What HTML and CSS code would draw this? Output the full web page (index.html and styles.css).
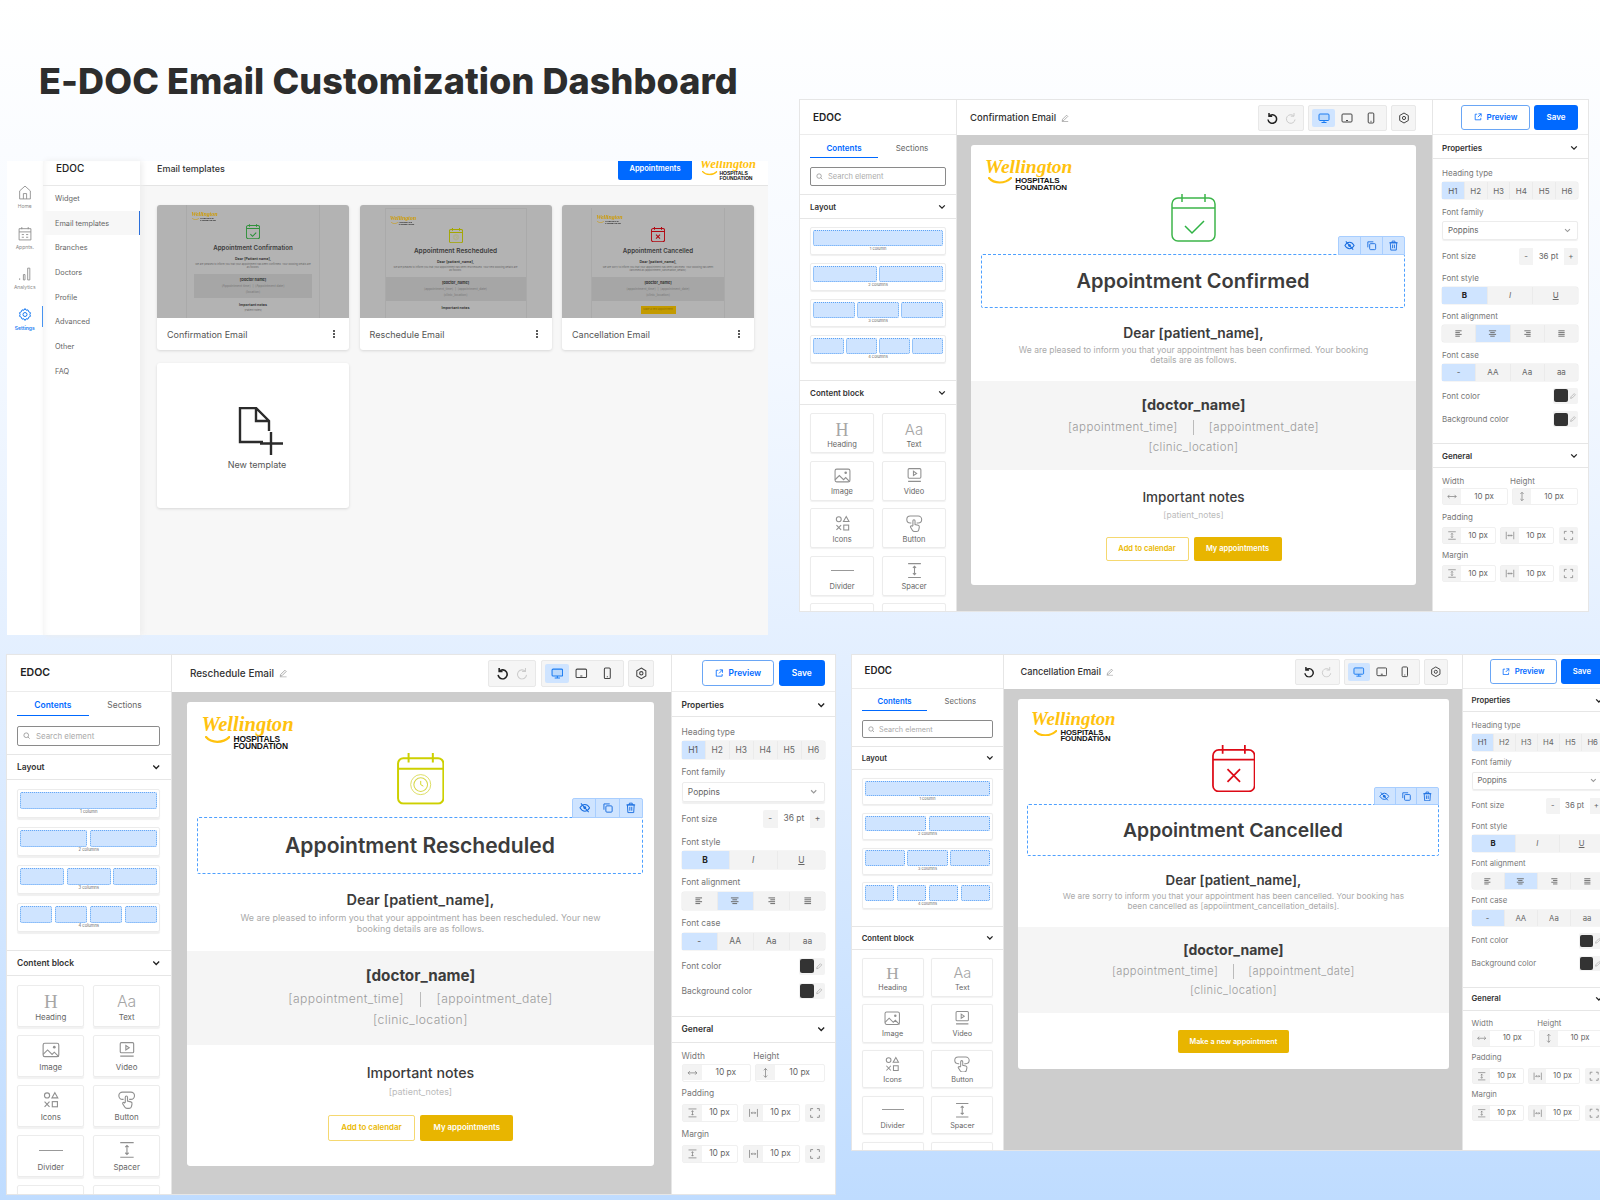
FILE: index.html
```html
<!DOCTYPE html>
<html lang="en">

<head>
    <meta charset="utf-8">
    <title>E-DOC Email Customization Dashboard</title>
    <link rel="stylesheet" href="styles.css">
</head>

<body>
    <!-- icons, used through <use> in all the windows -->
    <svg class="sprite" xmlns="http://www.w3.org/2000/svg">
        <symbol id="i-chevron" viewBox="0 0 10 10"><path d="M1.5 3l3.5 3.5L8.5 3" fill="none" stroke="currentColor" stroke-width="1.6"/></symbol>
        <symbol id="i-search" viewBox="0 0 10 10"><circle cx="4.4" cy="4.4" r="3.2" fill="none" stroke="currentColor"/><path d="M6.8 6.8L9 9" stroke="currentColor"/></symbol>
        <symbol id="i-pencil" viewBox="0 0 10 10"><path d="M1.5 8.5l.5-2L7 1.5l1.5 1.5-5 5zM1 9.5h8" fill="none" stroke="currentColor" stroke-width=".8"/></symbol>
        <symbol id="i-undo" viewBox="0 0 12 12"><path d="M3 1v3.2h3.2M3.2 4A4.3 4.3 0 1 1 2 7.5" fill="none" stroke="currentColor" stroke-width="1.5"/></symbol>
        <symbol id="i-redo" viewBox="0 0 12 12"><path d="M9 1v3.2H5.8M8.8 4A4.3 4.3 0 1 0 10 7.5" fill="none" stroke="currentColor" stroke-width="1"/></symbol>
        <symbol id="i-desktop" viewBox="0 0 12 12"><rect x="1" y="2" width="10" height="6.5" rx="1" fill="#bcd9fb" stroke="currentColor"/><path d="M6 8.5v2M3.5 10.5h5" stroke="currentColor"/></symbol>
        <symbol id="i-tablet" viewBox="0 0 12 12"><rect x="1" y="2" width="10" height="8" rx="1" fill="none" stroke="currentColor"/><path d="M5 8.5h2" stroke="currentColor"/></symbol>
        <symbol id="i-phone" viewBox="0 0 12 12"><rect x="3.2" y="1" width="5.6" height="10" rx="1" fill="none" stroke="currentColor"/><path d="M5.5 9.3h1" stroke="currentColor"/></symbol>
        <symbol id="i-gear" viewBox="0 0 12 12"><path d="M6 1l4.3 2.5v5L6 11 1.7 8.5v-5z" fill="none" stroke="currentColor"/><circle cx="6" cy="6" r="1.6" fill="none" stroke="currentColor"/></symbol>
        <symbol id="i-link" viewBox="0 0 10 10"><path d="M4 1.5H1.5v7h7V6M5.5 1h3.5v3.5M9 1L4.8 5.2" fill="none" stroke="currentColor"/></symbol>
        <symbol id="i-eye" viewBox="0 0 12 12"><path d="M1 6s2-3.5 5-3.5S11 6 11 6 9 9.5 6 9.5 1 6 1 6z" fill="none" stroke="currentColor" stroke-width="1.1"/><circle cx="6" cy="6" r="1.5" fill="currentColor"/><path d="M2 1.5l8 9" stroke="currentColor" stroke-width="1.1"/></symbol>
        <symbol id="i-copy" viewBox="0 0 12 12"><rect x="4" y="4" width="6.5" height="6.5" rx="1" fill="none" stroke="currentColor"/><path d="M8 2H2v6" fill="none" stroke="currentColor"/></symbol>
        <symbol id="i-trash" viewBox="0 0 12 12"><path d="M2.5 3h7l-.5 8H3zM1.5 3h9M4.5 3V1.2h3V3M5 5v4M7 5v4" fill="none" stroke="currentColor"/></symbol>
        <symbol id="i-image" viewBox="0 0 16 16"><rect x="1" y="2" width="14" height="12" rx="1.5" fill="none" stroke="currentColor"/><circle cx="11" cy="5.5" r="1.2" fill="currentColor"/><path d="M1 12l4-4 4 4 2-2 4 4" fill="none" stroke="currentColor"/></symbol>
        <symbol id="i-video" viewBox="0 0 16 16"><rect x="2" y="1.5" width="12" height="9" rx="1" fill="none" stroke="currentColor"/><path d="M7 4l3 2-3 2zM2 13.5h12" fill="none" stroke="currentColor"/></symbol>
        <symbol id="i-shapes" viewBox="0 0 16 16"><circle cx="4.5" cy="4" r="2.3" fill="none" stroke="currentColor"/><path d="M11.5 1.5l2.6 4.6H8.9zM2.3 9.5l4.4 4.6M6.7 9.5l-4.4 4.6" fill="none" stroke="currentColor"/><rect x="9.2" y="9.5" width="4.6" height="4.6" fill="none" stroke="currentColor"/></symbol>
        <symbol id="i-hand" viewBox="0 0 16 16"><path d="M5 7.500H4a2.700 2.700 0 0 1 0-6.500h7.500a2.700 2.700 0 0 1 0 6.500H10" fill="none" stroke="currentColor"/><path d="M6.500 10V5.500a1 1 0 0 1 2 0V9l3 .7c1 .3 1.200 1 1 2l-.5 2.300c-.2 1-1 1.500-2 1.500H8c-1 0-1.500-.4-2-1.200L4.300 11.600c-.6-1 .8-2 1.500-1z" fill="#fff" stroke="currentColor"/></symbol>
        <symbol id="i-spacer" viewBox="0 0 16 16"><path d="M2 1.5h12M2 14.5h12M8 4v8M6.5 5.5L8 4l1.5 1.5M6.5 10.5L8 12l1.5-1.5" fill="none" stroke="currentColor"/></symbol>
        <symbol id="i-left" viewBox="0 0 10 10"><path d="M1.5 2h7M1.5 4h5M1.5 6h7M1.5 8h5" stroke="currentColor"/></symbol>
        <symbol id="i-center" viewBox="0 0 10 10"><path d="M1 2h8M2.5 4h5M1 6h8M2.5 8h5" stroke="currentColor"/></symbol>
        <symbol id="i-right" viewBox="0 0 10 10"><path d="M1.5 2h7M3.5 4h5M1.5 6h7M3.5 8h5" stroke="currentColor"/></symbol>
        <symbol id="i-justify" viewBox="0 0 10 10"><path d="M1.5 2h7M1.5 4h7M1.5 6h7M1.5 8h7" stroke="currentColor"/></symbol>
        <symbol id="i-pick" viewBox="0 0 10 10"><path d="M2 8l.5-2L6.5 2 8 3.5l-4 4z" fill="none" stroke="currentColor" stroke-width=".7"/></symbol>
        <symbol id="i-hsize" viewBox="0 0 12 12"><path d="M1 6h10M3 4L1 6l2 2M9 4l2 2-2 2" fill="none" stroke="currentColor" stroke-width=".8"/></symbol>
        <symbol id="i-vsize" viewBox="0 0 12 12"><path d="M6 1v10M4 3l2-2 2 2M4 9l2 2 2-2" fill="none" stroke="currentColor" stroke-width=".8"/></symbol>
        <symbol id="i-vpad" viewBox="0 0 12 12"><path d="M1.5 1.5h9M1.5 10.500h9M6 3.500v5M4.800 4.700L6 3.500l1.200 1.200M4.800 7.300L6 8.500l1.200-1.200" fill="none" stroke="currentColor" stroke-width=".8"/></symbol>
        <symbol id="i-hpad" viewBox="0 0 12 12"><path d="M1.5 1.5v9M10.500 1.5v9M3.500 6h5M4.700 4.800L3.500 6l1.200 1.200M7.300 4.800L8.500 6l-1.200 1.200" fill="none" stroke="currentColor" stroke-width=".8"/></symbol>
        <symbol id="i-corners" viewBox="0 0 12 12"><path d="M1.5 4V1.5H4M8 1.5h2.500V4M10.500 8v2.500H8M4 10.500H1.500V8" fill="none" stroke="currentColor" stroke-width=".8"/></symbol>
        <symbol id="i-smile" viewBox="0 0 24 7"><path d="M1 1c5 6 16 6 22 0" fill="none" stroke="#ffc20e" stroke-width="2.2" stroke-linecap="round"/></symbol>
        <symbol id="i-cal-ok" viewBox="0 0 45 49"><rect x="1" y="5" width="43" height="43" rx="6" fill="none" stroke="#3cb54a"/><path d="M1 15h43M11 1v8M34 1v8" fill="none" stroke="#3cb54a"/><path d="M14 33l7 7 12-12" fill="none" stroke="#2fb344"/></symbol>
        <symbol id="i-cal-time" viewBox="0 0 45 49"><rect x="1" y="5" width="43" height="43" rx="5" fill="none" stroke="#cdd000"/><path d="M1 15h43M11 0v9M34 0v9" fill="none" stroke="#cdd000"/><circle cx="22.5" cy="30" r="9.5" fill="none" stroke="#d6d84a" stroke-width=".8"/><circle cx="22.5" cy="30" r="6.5" fill="none" stroke="#d6d84a" stroke-width="1"/><path d="M22.5 26.5V30l2.5 1.5" fill="none" stroke="#cdd000" stroke-width=".8"/></symbol>
        <symbol id="i-cal-no" viewBox="0 0 45 49"><rect x="1" y="5" width="43" height="43" rx="6" fill="none" stroke="#dd0a16"/><path d="M1 15h43M11 0v9M34 0v9" fill="none" stroke="#dd0a16"/><path d="M16 25l13 13M29 25L16 38" fill="none" stroke="#dd0a16"/></symbol>
        <symbol id="i-home" viewBox="0 0 12 14"><path d="M1 5.5L6 1l5 4.500V13H1zM4.500 13V8h3v5" fill="none" stroke="currentColor" stroke-width=".8"/></symbol>
        <symbol id="i-cal" viewBox="0 0 13 14"><path d="M1 2.500h11V13H1zM1 5.500h11M3.500 1v2M9.500 1v2M3.500 8h2M7.500 8h2M3.500 10.500h2M7.500 10.500h2" fill="none" stroke="currentColor" stroke-width=".8"/></symbol>
        <symbol id="i-bars" viewBox="0 0 13 14"><path d="M1.500 13v-1.500M5 13V8h1.500v5zM9 13V2h2v11z" fill="none" stroke="currentColor" stroke-width=".8"/></symbol>
        <symbol id="i-cog" viewBox="0 0 14 14"><path d="M7 1l1 1.700 2-.3.700 1.900 1.800.9-.6 1.800.6 1.800-1.800.9-.7 1.900-2-.3L7 13l-1-1.700-2 .3-.7-1.900-1.800-.9.600-1.800-.6-1.800 1.800-.9.700-1.900 2 .3z" fill="none" stroke="currentColor"/><circle cx="7" cy="7" r="2" fill="none" stroke="currentColor"/></symbol>
        <symbol id="i-newdoc" viewBox="0 0 46 48"><path d="M25 35H2V1h16l13 13v10M18 1v13h13" fill="none" stroke="#2b2b2b" stroke-width="2.4"/><path d="M33 25v23M22 36.500h23" fill="none" stroke="#2b2b2b" stroke-width="2.4"/></symbol>
    </svg>

    <div class="stage">
        <h1 class="page-title">E-DOC Email Customization Dashboard</h1>

        <!-- template list -->
        <section class="win win-dash">
            <div class="dash">
                <nav class="rail">
                    <a class="rail-item"><svg><use href="#i-home"/></svg>Home</a>
                    <a class="rail-item"><svg><use href="#i-cal"/></svg>Appnts.</a>
                    <a class="rail-item"><svg><use href="#i-bars"/></svg>Analytics</a>
                    <a class="rail-item active"><svg><use href="#i-cog"/></svg>Settings</a>
                </nav>
                <nav class="side">
                    <div class="side-head">EDOC</div>
                    <a class="side-item">Widget</a>
                    <a class="side-item active">Email templates</a>
                    <a class="side-item">Branches</a>
                    <a class="side-item">Doctors</a>
                    <a class="side-item">Profile</a>
                    <a class="side-item">Advanced</a>
                    <a class="side-item">Other</a>
                    <a class="side-item">FAQ</a>
                </nav>
                <div class="dash-main">
                    <header class="dash-head">
                        <span class="dash-title">Email templates</span>
                        <a class="btn-appts">Appointments</a>
                        <div class="logo logo-small">
                            <div class="logo-script">Wellington</div>
                            <div class="logo-row">
                                <svg class="logo-smile"><use href="#i-smile"/></svg>
                                <div class="logo-name">HOSPITALS<br>FOUNDATION</div>
                            </div>
                        </div>
                    </header>
                    <div class="cards">
                        <article class="card">
                            <div class="thumb">
                                <div class="thumb-sheet thumb-first">
                                    <div class="logo logo-tiny">
                                        <div class="logo-script">Wellington</div>
                                        <div class="logo-row">
                                            <svg class="logo-smile"><use href="#i-smile"/></svg>
                                            <div class="logo-name">HOSPITALS<br>FOUNDATION</div>
                                        </div>
                                    </div>
                                    <svg class="thumb-cal"><use href="#i-cal-ok"/></svg>
                                    <div class="thumb-title">Appointment Confirmation</div>
                                    <div class="thumb-dear">Dear [Patient name],</div>
                                    <p class="thumb-text">We are pleased to inform you that your appointment has been confirmed. Your booking details are as follows.</p>
                                    <div class="thumb-band">
                                        <b>[Doctor name]</b>
                                        <span>[Appointment time] &nbsp;|&nbsp; [Appointment date]</span>
                                        <span>[location]</span>
                                    </div>
                                    <div class="thumb-dear">Important notes</div>
                                    <p class="thumb-text">[Patient notes]</p>
                                </div>
                            </div>
                            <footer class="card-foot">Confirmation Email<span class="kebab"></span></footer>
                        </article>
                        <article class="card">
                            <div class="thumb">
                                <div class="thumb-sheet thumb-second">
                                    <div class="logo logo-tiny">
                                        <div class="logo-script">Wellington</div>
                                        <div class="logo-row">
                                            <svg class="logo-smile"><use href="#i-smile"/></svg>
                                            <div class="logo-name">HOSPITALS<br>FOUNDATION</div>
                                        </div>
                                    </div>
                                    <svg class="thumb-cal"><use href="#i-cal-time"/></svg>
                                    <div class="thumb-title">Appointment Rescheduled</div>
                                    <div class="thumb-dear">Dear [patient_name],</div>
                                    <p class="thumb-text">We are pleased to inform you that your appointment has been rescheduled. Your new booking details are as follows.</p>
                                    <div class="thumb-band">
                                        <b>[doctor_name]</b>
                                        <span>[appointment_time] &nbsp;|&nbsp; [appointment_date]</span>
                                        <span>[clinic_location]</span>
                                    </div>
                                    <div class="thumb-dear">Important notes</div>
                                </div>
                            </div>
                            <footer class="card-foot">Reschedule Email<span class="kebab"></span></footer>
                        </article>
                        <article class="card">
                            <div class="thumb">
                                <div class="thumb-sheet thumb-third">
                                    <div class="logo logo-tiny">
                                        <div class="logo-script">Wellington</div>
                                        <div class="logo-row">
                                            <svg class="logo-smile"><use href="#i-smile"/></svg>
                                            <div class="logo-name">HOSPITALS<br>FOUNDATION</div>
                                        </div>
                                    </div>
                                    <svg class="thumb-cal"><use href="#i-cal-no"/></svg>
                                    <div class="thumb-title">Appointment Cancelled</div>
                                    <div class="thumb-dear">Dear [patient_name],</div>
                                    <p class="thumb-text">We are sorry to inform you that your appointment has been cancelled. Your booking has been cancelled as [appointment_cancellation_details].</p>
                                    <div class="thumb-band">
                                        <b>[doctor_name]</b>
                                        <span>[appointment_time] &nbsp;|&nbsp; [appointment_date]</span>
                                        <span>[clinic_location]</span>
                                    </div>
                                    <div class="thumb-btn">Make a new appointment</div>
                                </div>
                            </div>
                            <footer class="card-foot">Cancellation Email<span class="kebab"></span></footer>
                        </article>
                        <article class="card card-new">
                            <svg class="newdoc"><use href="#i-newdoc"/></svg>
                            <span>New template</span>
                        </article>
                    </div>
                </div>
            </div>
        </section>

        <!-- confirmation editor -->
        <section class="win win-confirm">
            <div class="editor">
                <aside class="pane-left">
                    <div class="pane-head">EDOC</div>
                    <div class="tabs"><span class="tab active">Contents</span><span class="tab">Sections</span></div>
                    <div class="search"><svg><use href="#i-search"/></svg>Search element</div>
                    <div class="section-head">Layout<svg><use href="#i-chevron"/></svg></div>
                    <div class="layouts">
                        <div class="layout"><div class="blocks"><i></i></div>1 column</div>
                        <div class="layout"><div class="blocks"><i></i><i></i></div>2 columns</div>
                        <div class="layout"><div class="blocks"><i></i><i></i><i></i></div>3 columns</div>
                        <div class="layout"><div class="blocks"><i></i><i></i><i></i><i></i></div>4 columns</div>
                    </div>
                    <div class="section-head">Content block<svg><use href="#i-chevron"/></svg></div>
                    <div class="tiles">
                        <div class="tile"><span class="glyph glyph-h">H</span>Heading</div>
                        <div class="tile"><span class="glyph">Aa</span>Text</div>
                        <div class="tile"><svg><use href="#i-image"/></svg>Image</div>
                        <div class="tile"><svg><use href="#i-video"/></svg>Video</div>
                        <div class="tile"><svg><use href="#i-shapes"/></svg>Icons</div>
                        <div class="tile"><svg><use href="#i-hand"/></svg>Button</div>
                        <div class="tile"><span class="rule"></span>Divider</div>
                        <div class="tile"><svg><use href="#i-spacer"/></svg>Spacer</div>
                        <div class="tile"></div>
                        <div class="tile"></div>
                    </div>
                </aside>
                <main class="pane-mid">
                    <header class="mid-head">
                        <span class="doc-name">Confirmation Email</span>
                        <svg class="doc-edit"><use href="#i-pencil"/></svg>
                        <div class="tools">
                            <div class="tool-group"><span class="tool tool-dark"><svg><use href="#i-undo"/></svg></span><span class="tool tool-off"><svg><use href="#i-redo"/></svg></span></div>
                            <div class="tool-group"><span class="tool tool-on"><svg><use href="#i-desktop"/></svg></span><span class="tool tool-wide"><svg><use href="#i-tablet"/></svg></span><span class="tool tool-wide"><svg><use href="#i-phone"/></svg></span></div>
                            <div class="tool-group"><span class="tool tool-wide"><svg><use href="#i-gear"/></svg></span></div>
                        </div>
                    </header>
                    <div class="canvas">
                        <div class="sheet">
                            <div class="logo">
                                <div class="logo-script">Wellington</div>
                                <div class="logo-row">
                                    <svg class="logo-smile"><use href="#i-smile"/></svg>
                                    <div class="logo-name">HOSPITALS<br>FOUNDATION</div>
                                </div>
                            </div>
                            <svg class="sheet-cal cal-ok"><use href="#i-cal-ok"/></svg>
                            <div class="picked">
                                <h2>Appointment Confirmed</h2>
                                <div class="picked-tools"><span><svg><use href="#i-eye"/></svg></span><span><svg><use href="#i-copy"/></svg></span><span><svg><use href="#i-trash"/></svg></span></div>
                            </div>
                            <h3 class="dear">Dear [patient_name],</h3>
                            <p class="lead">We are pleased to inform you that your appointment has been confirmed. Your booking details are as follows.</p>
                            <div class="band">
                                <h3>[doctor_name]</h3>
                                <div class="band-row"><span>[appointment_time]</span><i></i><span>[appointment_date]</span></div>
                                <div class="band-row">[clinic_location]</div>
                            </div>
                            <h3 class="notes">Important notes</h3>
                            <p class="notes-text">[patient_notes]</p>
                            <div class="actions"><a class="btn-ghost">Add to calendar</a><a class="btn-gold">My appointments</a></div>
                        </div>
                    </div>
                </main>
                <aside class="pane-right">
                    <div class="right-head"><a class="btn-preview"><svg><use href="#i-link"/></svg>Preview</a><a class="btn-save">Save</a></div>
                    <div class="section-head section-flush">Properties<svg><use href="#i-chevron"/></svg></div>
                    <div class="props">
                        <label>Heading type</label>
                        <div class="seg"><span class="on">H1</span><span>H2</span><span>H3</span><span>H4</span><span>H5</span><span>H6</span></div>
                        <label>Font family</label>
                        <div class="select">Poppins<svg><use href="#i-chevron"/></svg></div>
                        <div class="line"><label>Font size</label><div class="stepper"><span>-</span><b>36 pt</b><span>+</span></div></div>
                        <label>Font style</label>
                        <div class="seg"><span class="on strong">B</span><span class="em">I</span><span class="under">U</span></div>
                        <label>Font alignment</label>
                        <div class="seg"><span><svg><use href="#i-left"/></svg></span><span class="on"><svg><use href="#i-center"/></svg></span><span><svg><use href="#i-right"/></svg></span><span><svg><use href="#i-justify"/></svg></span></div>
                        <label>Font case</label>
                        <div class="seg"><span class="on">-</span><span>AA</span><span>Aa</span><span>aa</span></div>
                        <div class="line line-color"><label>Font color</label><div class="swatch"><i></i><svg><use href="#i-pick"/></svg></div></div>
                        <div class="line line-color"><label>Background color</label><div class="swatch"><i></i><svg><use href="#i-pick"/></svg></div></div>
                    </div>
                    <div class="section-head section-general">General<svg><use href="#i-chevron"/></svg></div>
                    <div class="props">
                        <div class="pair"><label>Width</label><label>Height</label></div>
                        <div class="fields"><div class="field"><svg><use href="#i-hsize"/></svg><b>10 px</b></div><div class="field"><svg><use href="#i-vsize"/></svg><b>10 px</b></div></div>
                        <label>Padding</label>
                        <div class="fields"><div class="field"><svg><use href="#i-vpad"/></svg><b>10 px</b></div><div class="field"><svg><use href="#i-hpad"/></svg><b>10 px</b></div><div class="field-all"><svg><use href="#i-corners"/></svg></div></div>
                        <label>Margin</label>
                        <div class="fields"><div class="field"><svg><use href="#i-vpad"/></svg><b>10 px</b></div><div class="field"><svg><use href="#i-hpad"/></svg><b>10 px</b></div><div class="field-all"><svg><use href="#i-corners"/></svg></div></div>
                    </div>
                </aside>
            </div>
        </section>

        <!-- reschedule editor -->
        <section class="win win-resched">
            <div class="editor">
                <aside class="pane-left">
                    <div class="pane-head">EDOC</div>
                    <div class="tabs"><span class="tab active">Contents</span><span class="tab">Sections</span></div>
                    <div class="search"><svg><use href="#i-search"/></svg>Search element</div>
                    <div class="section-head">Layout<svg><use href="#i-chevron"/></svg></div>
                    <div class="layouts">
                        <div class="layout"><div class="blocks"><i></i></div>1 column</div>
                        <div class="layout"><div class="blocks"><i></i><i></i></div>2 columns</div>
                        <div class="layout"><div class="blocks"><i></i><i></i><i></i></div>3 columns</div>
                        <div class="layout"><div class="blocks"><i></i><i></i><i></i><i></i></div>4 columns</div>
                    </div>
                    <div class="section-head">Content block<svg><use href="#i-chevron"/></svg></div>
                    <div class="tiles">
                        <div class="tile"><span class="glyph glyph-h">H</span>Heading</div>
                        <div class="tile"><span class="glyph">Aa</span>Text</div>
                        <div class="tile"><svg><use href="#i-image"/></svg>Image</div>
                        <div class="tile"><svg><use href="#i-video"/></svg>Video</div>
                        <div class="tile"><svg><use href="#i-shapes"/></svg>Icons</div>
                        <div class="tile"><svg><use href="#i-hand"/></svg>Button</div>
                        <div class="tile"><span class="rule"></span>Divider</div>
                        <div class="tile"><svg><use href="#i-spacer"/></svg>Spacer</div>
                        <div class="tile"></div>
                        <div class="tile"></div>
                    </div>
                </aside>
                <main class="pane-mid">
                    <header class="mid-head">
                        <span class="doc-name">Reschedule Email</span>
                        <svg class="doc-edit"><use href="#i-pencil"/></svg>
                        <div class="tools">
                            <div class="tool-group"><span class="tool tool-dark"><svg><use href="#i-undo"/></svg></span><span class="tool tool-off"><svg><use href="#i-redo"/></svg></span></div>
                            <div class="tool-group"><span class="tool tool-on"><svg><use href="#i-desktop"/></svg></span><span class="tool tool-wide"><svg><use href="#i-tablet"/></svg></span><span class="tool tool-wide"><svg><use href="#i-phone"/></svg></span></div>
                            <div class="tool-group"><span class="tool tool-wide"><svg><use href="#i-gear"/></svg></span></div>
                        </div>
                    </header>
                    <div class="canvas">
                        <div class="sheet">
                            <div class="logo">
                                <div class="logo-script">Wellington</div>
                                <div class="logo-row">
                                    <svg class="logo-smile"><use href="#i-smile"/></svg>
                                    <div class="logo-name">HOSPITALS<br>FOUNDATION</div>
                                </div>
                            </div>
                            <svg class="sheet-cal cal-time"><use href="#i-cal-time"/></svg>
                            <div class="picked">
                                <h2>Appointment Rescheduled</h2>
                                <div class="picked-tools"><span><svg><use href="#i-eye"/></svg></span><span><svg><use href="#i-copy"/></svg></span><span><svg><use href="#i-trash"/></svg></span></div>
                            </div>
                            <h3 class="dear">Dear [patient_name],</h3>
                            <p class="lead">We are pleased to inform you that your appointment has been rescheduled. Your new booking details are as follows.</p>
                            <div class="band">
                                <h3>[doctor_name]</h3>
                                <div class="band-row"><span>[appointment_time]</span><i></i><span>[appointment_date]</span></div>
                                <div class="band-row">[clinic_location]</div>
                            </div>
                            <h3 class="notes">Important notes</h3>
                            <p class="notes-text">[patient_notes]</p>
                            <div class="actions"><a class="btn-ghost">Add to calendar</a><a class="btn-gold">My appointments</a></div>
                        </div>
                    </div>
                </main>
                <aside class="pane-right">
                    <div class="right-head"><a class="btn-preview"><svg><use href="#i-link"/></svg>Preview</a><a class="btn-save">Save</a></div>
                    <div class="section-head section-flush">Properties<svg><use href="#i-chevron"/></svg></div>
                    <div class="props">
                        <label>Heading type</label>
                        <div class="seg"><span class="on">H1</span><span>H2</span><span>H3</span><span>H4</span><span>H5</span><span>H6</span></div>
                        <label>Font family</label>
                        <div class="select">Poppins<svg><use href="#i-chevron"/></svg></div>
                        <div class="line"><label>Font size</label><div class="stepper"><span>-</span><b>36 pt</b><span>+</span></div></div>
                        <label>Font style</label>
                        <div class="seg"><span class="on strong">B</span><span class="em">I</span><span class="under">U</span></div>
                        <label>Font alignment</label>
                        <div class="seg"><span><svg><use href="#i-left"/></svg></span><span class="on"><svg><use href="#i-center"/></svg></span><span><svg><use href="#i-right"/></svg></span><span><svg><use href="#i-justify"/></svg></span></div>
                        <label>Font case</label>
                        <div class="seg"><span class="on">-</span><span>AA</span><span>Aa</span><span>aa</span></div>
                        <div class="line line-color"><label>Font color</label><div class="swatch"><i></i><svg><use href="#i-pick"/></svg></div></div>
                        <div class="line line-color"><label>Background color</label><div class="swatch"><i></i><svg><use href="#i-pick"/></svg></div></div>
                    </div>
                    <div class="section-head section-general">General<svg><use href="#i-chevron"/></svg></div>
                    <div class="props">
                        <div class="pair"><label>Width</label><label>Height</label></div>
                        <div class="fields"><div class="field"><svg><use href="#i-hsize"/></svg><b>10 px</b></div><div class="field"><svg><use href="#i-vsize"/></svg><b>10 px</b></div></div>
                        <label>Padding</label>
                        <div class="fields"><div class="field"><svg><use href="#i-vpad"/></svg><b>10 px</b></div><div class="field"><svg><use href="#i-hpad"/></svg><b>10 px</b></div><div class="field-all"><svg><use href="#i-corners"/></svg></div></div>
                        <label>Margin</label>
                        <div class="fields"><div class="field"><svg><use href="#i-vpad"/></svg><b>10 px</b></div><div class="field"><svg><use href="#i-hpad"/></svg><b>10 px</b></div><div class="field-all"><svg><use href="#i-corners"/></svg></div></div>
                    </div>
                </aside>
            </div>
        </section>

        <!-- cancellation editor, runs off the right edge -->
        <section class="win win-cancel">
            <div class="editor">
                <aside class="pane-left">
                    <div class="pane-head">EDOC</div>
                    <div class="tabs"><span class="tab active">Contents</span><span class="tab">Sections</span></div>
                    <div class="search"><svg><use href="#i-search"/></svg>Search element</div>
                    <div class="section-head">Layout<svg><use href="#i-chevron"/></svg></div>
                    <div class="layouts">
                        <div class="layout"><div class="blocks"><i></i></div>1 column</div>
                        <div class="layout"><div class="blocks"><i></i><i></i></div>2 columns</div>
                        <div class="layout"><div class="blocks"><i></i><i></i><i></i></div>3 columns</div>
                        <div class="layout"><div class="blocks"><i></i><i></i><i></i><i></i></div>4 columns</div>
                    </div>
                    <div class="section-head">Content block<svg><use href="#i-chevron"/></svg></div>
                    <div class="tiles">
                        <div class="tile"><span class="glyph glyph-h">H</span>Heading</div>
                        <div class="tile"><span class="glyph">Aa</span>Text</div>
                        <div class="tile"><svg><use href="#i-image"/></svg>Image</div>
                        <div class="tile"><svg><use href="#i-video"/></svg>Video</div>
                        <div class="tile"><svg><use href="#i-shapes"/></svg>Icons</div>
                        <div class="tile"><svg><use href="#i-hand"/></svg>Button</div>
                        <div class="tile"><span class="rule"></span>Divider</div>
                        <div class="tile"><svg><use href="#i-spacer"/></svg>Spacer</div>
                        <div class="tile"></div>
                        <div class="tile"></div>
                    </div>
                </aside>
                <main class="pane-mid">
                    <header class="mid-head">
                        <span class="doc-name">Cancellation Email</span>
                        <svg class="doc-edit"><use href="#i-pencil"/></svg>
                        <div class="tools">
                            <div class="tool-group"><span class="tool tool-dark"><svg><use href="#i-undo"/></svg></span><span class="tool tool-off"><svg><use href="#i-redo"/></svg></span></div>
                            <div class="tool-group"><span class="tool tool-on"><svg><use href="#i-desktop"/></svg></span><span class="tool tool-wide"><svg><use href="#i-tablet"/></svg></span><span class="tool tool-wide"><svg><use href="#i-phone"/></svg></span></div>
                            <div class="tool-group"><span class="tool tool-wide"><svg><use href="#i-gear"/></svg></span></div>
                        </div>
                    </header>
                    <div class="canvas">
                        <div class="sheet">
                            <div class="logo">
                                <div class="logo-script">Wellington</div>
                                <div class="logo-row">
                                    <svg class="logo-smile"><use href="#i-smile"/></svg>
                                    <div class="logo-name">HOSPITALS<br>FOUNDATION</div>
                                </div>
                            </div>
                            <svg class="sheet-cal cal-no"><use href="#i-cal-no"/></svg>
                            <div class="picked">
                                <h2>Appointment Cancelled</h2>
                                <div class="picked-tools"><span><svg><use href="#i-eye"/></svg></span><span><svg><use href="#i-copy"/></svg></span><span><svg><use href="#i-trash"/></svg></span></div>
                            </div>
                            <h3 class="dear">Dear [patient_name],</h3>
                            <p class="lead">We are sorry to inform you that your appointment has been cancelled. Your booking has been cancelled as [appoiintment_cancellation_details].</p>
                            <div class="band">
                                <h3>[doctor_name]</h3>
                                <div class="band-row"><span>[appointment_time]</span><i></i><span>[appointment_date]</span></div>
                                <div class="band-row">[clinic_location]</div>
                            </div>
                            <div class="actions actions-single"><a class="btn-gold btn-wide">Make a new appointment</a></div>
                        </div>
                    </div>
                </main>
                <aside class="pane-right">
                    <div class="right-head"><a class="btn-preview"><svg><use href="#i-link"/></svg>Preview</a><a class="btn-save">Save</a></div>
                    <div class="section-head section-flush">Properties<svg><use href="#i-chevron"/></svg></div>
                    <div class="props">
                        <label>Heading type</label>
                        <div class="seg"><span class="on">H1</span><span>H2</span><span>H3</span><span>H4</span><span>H5</span><span>H6</span></div>
                        <label>Font family</label>
                        <div class="select">Poppins<svg><use href="#i-chevron"/></svg></div>
                        <div class="line"><label>Font size</label><div class="stepper"><span>-</span><b>36 pt</b><span>+</span></div></div>
                        <label>Font style</label>
                        <div class="seg"><span class="on strong">B</span><span class="em">I</span><span class="under">U</span></div>
                        <label>Font alignment</label>
                        <div class="seg"><span><svg><use href="#i-left"/></svg></span><span class="on"><svg><use href="#i-center"/></svg></span><span><svg><use href="#i-right"/></svg></span><span><svg><use href="#i-justify"/></svg></span></div>
                        <label>Font case</label>
                        <div class="seg"><span class="on">-</span><span>AA</span><span>Aa</span><span>aa</span></div>
                        <div class="line line-color"><label>Font color</label><div class="swatch"><i></i><svg><use href="#i-pick"/></svg></div></div>
                        <div class="line line-color"><label>Background color</label><div class="swatch"><i></i><svg><use href="#i-pick"/></svg></div></div>
                    </div>
                    <div class="section-head section-general">General<svg><use href="#i-chevron"/></svg></div>
                    <div class="props">
                        <div class="pair"><label>Width</label><label>Height</label></div>
                        <div class="fields"><div class="field"><svg><use href="#i-hsize"/></svg><b>10 px</b></div><div class="field"><svg><use href="#i-vsize"/></svg><b>10 px</b></div></div>
                        <label>Padding</label>
                        <div class="fields"><div class="field"><svg><use href="#i-vpad"/></svg><b>10 px</b></div><div class="field"><svg><use href="#i-hpad"/></svg><b>10 px</b></div><div class="field-all"><svg><use href="#i-corners"/></svg></div></div>
                        <label>Margin</label>
                        <div class="fields"><div class="field"><svg><use href="#i-vpad"/></svg><b>10 px</b></div><div class="field"><svg><use href="#i-hpad"/></svg><b>10 px</b></div><div class="field-all"><svg><use href="#i-corners"/></svg></div></div>
                    </div>
                </aside>
            </div>
        </section>
    </div>
</body>

</html>
```

FILE: styles.css
```css
html,
body {
    margin: 0;
    overflow: hidden;
    font-family: "Inter", "Liberation Sans", sans-serif;
    color: #333;
}

.sprite {
    display: none;
}

.stage {
    position: relative;
    width: 1600px;
    height: 1200px;
    overflow: hidden;
    background: linear-gradient(180deg, #ffffff 0%, #f3f8ff 30%, #e3efff 55%, #bfdcff 100%);
}

.page-title {
    position: absolute;
    left: 39px;
    top: 58px;
    margin: 0;
    font-size: 36px;
    line-height: 46px;
    font-weight: 800;
    letter-spacing: .1px;
    color: #2d2d2d;
    white-space: nowrap;
}

/* the windows are placed freely on the canvas */
.win {
    position: absolute;
}

.win-dash {
    left: 6.500px;
    top: 161px;
}

.win-confirm {
    left: 800px;
    top: 100px;
}

.win-resched {
    left: 6.500px;
    top: 655px;
}

.win-resched .editor {
    zoom: 1.054;
    width: 786.500px;
}

.win-resched .mid-head {
    padding-left: 17px;
}

.win-cancel {
    left: 852px;
    top: 655px;
}

.win-cancel .editor {
    zoom: .968;
    width: 786px;
}

.win-cancel .mid-head {
    padding: 0 14px 0 17px;
}

.win-cancel .canvas {
    padding-right: 13px;
}

/* ---- template list ---- */
.dash {
    display: flex;
    width: 761px;
    height: 474px;
    background: #fff;
}

.rail {
    width: 36.500px;
    flex: none;
    padding-top: 24px;
    box-sizing: border-box;
}

.rail-item {
    position: relative;
    display: flex;
    flex-direction: column;
    align-items: center;
    height: 40.700px;
    font-size: 5px;
    color: #8a8a8a;
}

.rail-item svg {
    width: 14px;
    height: 15px;
    margin-bottom: 3px;
}

.rail-item.active {
    color: #1b7cf2;
    font-weight: 600;
}

.rail-item.active::after {
    content: "";
    position: absolute;
    right: 0;
    top: -1px;
    width: 1.500px;
    height: 21px;
    background: #1b7cf2;
}

.side {
    width: 97px;
    flex: none;
    box-shadow: inset 6px 0 8px -6px #eee, 2px 0 6px #ececec;
    z-index: 1;
    background: #fff;
}

.side-head {
    height: 25px;
    padding-left: 13px;
    font-size: 10px;
    font-weight: 500;
    line-height: 15px;
    color: #222;
    border-bottom: 1px solid #e8e8e8;
    box-sizing: border-box;
}

.side-item {
    display: block;
    height: 24.700px;
    line-height: 26px;
    padding-left: 12px;
    font-size: 7.300px;
    color: #666;
}

.side-item.active {
    background: #f7f7f7;
    border-right: 1px solid #2a6fdb;
}

.dash-main {
    flex: 1;
    display: flex;
    flex-direction: column;
    background: #f7f7f7;
}

.dash-head {
    height: 25px;
    flex: none;
    display: flex;
    align-items: flex-start;
    padding: 0 15px 0 17px;
    background: #fff;
    border-bottom: 1px solid #e4e4e4;
    box-sizing: border-box;
    overflow: hidden;
}

.dash-title {
    font-size: 9px;
    font-weight: 500;
    line-height: 15px;
    color: #333;
    margin-right: auto;
}

.btn-appts {
    width: 74px;
    height: 19px;
    line-height: 16px;
    text-align: center;
    background: #0069ff;
    border-radius: 0 0 2px 2px;
    color: #fff;
    font-size: 7.500px;
    font-weight: 600;
    margin-right: 8px;
}

.cards {
    display: grid;
    grid-template-columns: repeat(3, 192px);
    column-gap: 10.500px;
    row-gap: 13px;
    align-items: start;
    padding: 19px 0 0 17px;
}

.card {
    height: 145px;
    background: #fff;
    border-radius: 3px;
    overflow: hidden;
    box-shadow: 0 1px 3px rgba(0, 0, 0, .13);
}

.thumb {
    height: 113px;
    background: #b3b3b3;
    overflow: hidden;
}

.thumb-sheet {
    width: 134px;
    height: 113px;
    margin: 0 auto;
    padding-top: 7px;
    box-sizing: border-box;
    border-left: 1px solid #aaa;
    border-right: 1px solid #aaa;
    text-align: center;
    color: #3c3c3c;
}

.thumb-second {
    margin-top: 3px;
    width: 142px;
    border-top: 1px solid #aaa;
}

.thumb-third {
    margin-top: 3px;
}

.logo-tiny {
    zoom: .3;
    margin-left: 14px;
    filter: brightness(.8);
}

.thumb-cal {
    display: block;
    width: 14px;
    height: 15px;
    margin: 2px auto 0;
    stroke-width: 3.400px;
    filter: brightness(.8);
}

.thumb-title {
    margin-top: 5px;
    font-size: 6.200px;
    line-height: 8px;
    font-weight: 600;
}

.thumb-second .thumb-title {
    margin-top: 4px;
    font-size: 6.500px;
}

.thumb-dear {
    margin-top: 5px;
    font-size: 3.600px;
    line-height: 5px;
    font-weight: 700;
}

.thumb-text {
    margin: 1px 8px 0;
    font-size: 2.500px;
    line-height: 3.500px;
    color: #666;
}

.thumb-band {
    margin-top: 4px;
    padding: 4px 0;
    background: #a6a6a6;
    display: flex;
    flex-direction: column;
    gap: 1.500px;
    font-size: 3.200px;
    line-height: 4.500px;
    color: #777;
}

.thumb-band b {
    color: #333;
    font-size: 3.800px;
}

.thumb-first .thumb-band {
    margin-left: 7px;
    margin-right: 7px;
}

.thumb-btn {
    width: 35px;
    height: 8px;
    margin: 5px auto 0;
    line-height: 8px;
    background: #c39a00;
    color: #8c6e00;
    font-size: 2.500px;
}

.card-foot {
    height: 32px;
    display: flex;
    align-items: center;
    justify-content: space-between;
    padding: 0 14px 0 10px;
    font-size: 9px;
    color: #555;
}

.kebab {
    width: 2px;
    height: 2px;
    background: #222;
    border-radius: 50%;
    box-shadow: 0 -3px 0 #222, 0 3px 0 #222;
}

.card-new {
    display: flex;
    flex-direction: column;
    align-items: center;
    padding-top: 44px;
    box-sizing: border-box;
    font-size: 9px;
    color: #555;
}

.card-new span {
    margin-left: 8px;
}

.newdoc {
    width: 46px;
    height: 48px;
    margin-left: 16px;
    margin-bottom: 4px;
}

/* ---- email editor ---- */
.editor {
    display: flex;
    width: 788px;
    height: 511px;
    background: #fff;
    box-shadow: 0 0 0 1px #e6e6e6;
}

.pane-left {
    width: 157px;
    flex: none;
    overflow: hidden;
    border-right: 1px solid #e6e6e6;
    box-sizing: border-box;
}

.pane-head {
    height: 35px;
    line-height: 34px;
    padding-left: 13px;
    font-size: 10px;
    font-weight: 600;
    color: #222;
    border-bottom: 1px solid #ececec;
    box-sizing: border-box;
}

.tabs {
    display: flex;
    height: 23px;
    padding: 0 10px;
}

.tab {
    width: 68px;
    padding-top: 3px;
    line-height: 20px;
    text-align: center;
    font-size: 8px;
    color: #666;
    box-sizing: border-box;
}

.tab.active {
    color: #0069ff;
    font-weight: 600;
    border-bottom: 1px solid #0069ff;
}

.search {
    display: flex;
    align-items: center;
    height: 19px;
    margin: 9px 10px 8px;
    padding-left: 5px;
    border: 1px solid #8a8a8a;
    border-radius: 2px;
    box-sizing: border-box;
    font-size: 7.500px;
    color: #aaa;
}

.search svg {
    width: 7px;
    height: 7px;
    margin-right: 5px;
    color: #888;
}

.section-head {
    display: flex;
    align-items: center;
    justify-content: space-between;
    height: 25px;
    padding: 0 10px;
    font-size: 8px;
    font-weight: 600;
    color: #333;
    border-top: 1px solid #e6e6e6;
    border-bottom: 1px solid #e6e6e6;
    box-sizing: border-box;
}

.section-head svg {
    width: 8px;
    height: 8px;
    color: #222;
}

.section-flush {
    border-top: 0;
    height: 24px;
    padding: 2px 10px 0 9px;
}

.section-general {
    margin-top: 16px;
    padding-left: 9px;
}

.layouts {
    display: flex;
    flex-direction: column;
    gap: 8px;
    padding: 8px 10px 17px;
}

.layout {
    height: 28px;
    padding: 2px;
    border: 1px solid #ececec;
    border-radius: 2px;
    box-sizing: border-box;
    box-shadow: 0 1px 1px #f0f0f0;
    font-size: 4px;
    line-height: 6px;
    text-align: center;
    color: #666;
}

.blocks {
    display: flex;
    gap: 2.500px;
    height: 16px;
}

.blocks i {
    flex: 1;
    background: #cfe4ff;
    border: 1px dotted #5aa2f5;
    border-radius: 2px;
}

.tiles {
    display: grid;
    grid-template-columns: 64px 64px;
    grid-auto-rows: 40px;
    gap: 7.500px 8px;
    padding: 8px 10px;
}

.tile {
    display: flex;
    flex-direction: column;
    align-items: center;
    justify-content: flex-end;
    padding-bottom: 3.500px;
    border: 1px solid #ececec;
    border-radius: 2px;
    box-sizing: border-box;
    box-shadow: 0 1px 1px #f2f2f2;
    font-size: 7.500px;
    color: #666;
}

.tile svg {
    width: 17px;
    height: 17px;
    margin-bottom: 3px;
    color: #909090;
}

.glyph {
    font-size: 15px;
    line-height: 20px;
    color: #a6a6a6;
    font-weight: 300;
}

.glyph-h {
    font-family: "Liberation Serif", serif;
    font-size: 18px;
    font-weight: 400;
}

.rule {
    width: 23px;
    height: 1px;
    margin-bottom: 11px;
    background: #999;
}

.pane-mid {
    flex: 1;
    min-width: 0;
    display: flex;
    flex-direction: column;
}

.mid-head {
    height: 35px;
    flex: none;
    display: flex;
    align-items: center;
    padding: 0 16px 0 13px;
}

.doc-name {
    font-size: 9.500px;
    font-weight: 500;
    color: #333;
}

.doc-edit {
    width: 8px;
    height: 8px;
    margin-left: 5px;
    color: #888;
}

.tools {
    display: flex;
    gap: 4px;
    margin-left: auto;
}

.tool-group {
    display: flex;
    height: 26px;
    padding: 3px;
    background: #f5f5f5;
    border: 1px solid #e8e8e8;
    border-radius: 2px;
    box-sizing: border-box;
}

.tool {
    display: flex;
    align-items: center;
    justify-content: center;
    width: 19px;
    border-radius: 2px;
    color: #444;
}

.tool svg {
    width: 12px;
    height: 12px;
}

.tool-wide {
    width: 24px;
}

.tool-group .tool-wide:only-child {
    width: 17px;
}

.tool-dark {
    color: #222;
}

.tool-off {
    color: #ccc;
}

.tool-on {
    width: 23px;
    background: #cfe4ff;
    color: #1b7cf2;
}

.canvas {
    flex: 1;
    min-height: 0;
    padding: 10px 16px 0 14px;
    background: #cdcdcd;
}

.sheet {
    padding-top: 13px;
    background: #fff;
    border-radius: 3px;
    overflow: hidden;
    text-align: center;
}

.logo {
    width: 82px;
    margin-left: 14px;
    text-align: left;
}

.logo-script {
    height: 19px;
    font-family: "Liberation Serif", serif;
    font-size: 19.500px;
    font-weight: 700;
    font-style: italic;
    line-height: 17px;
    letter-spacing: 0;
    color: #ffc20e;
    white-space: nowrap;
}

.logo-row {
    display: flex;
    justify-content: flex-end;
    gap: 3px;
}

.logo-smile {
    width: 24px;
    height: 7px;
}

.logo-name {
    font-family: "Liberation Sans", sans-serif;
    font-size: 8px;
    line-height: 7px;
    font-weight: 700;
    color: #111;
    letter-spacing: -.1px;
    white-space: nowrap;
}

.logo-small {
    zoom: .64;
    margin: -3px 0 0;
}

.sheet-cal {
    display: block;
    width: 45px;
    height: 49px;
    margin: 2px auto 0;
}

.cal-ok {
    stroke-width: 1.500px;
}

.cal-time {
    stroke-width: 1.900px;
}

.cal-no {
    stroke-width: 1.800px;
}

.picked {
    position: relative;
    height: 54px;
    margin: 12px 11px 0 10px;
    border: 1px dashed #4ea0ff;
    border-radius: 2px;
    box-sizing: border-box;
    display: flex;
    align-items: center;
    justify-content: center;
}

.picked h2 {
    margin: 0;
    font-size: 20px;
    font-weight: 600;
    color: #3c3c3c;
}

.picked-tools {
    position: absolute;
    right: -1px;
    top: -19px;
    display: flex;
    height: 19px;
    background: #cfe4ff;
    border: 1px solid #a8ceff;
    border-radius: 2px 2px 0 0;
    box-sizing: border-box;
    color: #1b6fe0;
}

.picked-tools span {
    display: flex;
    align-items: center;
    justify-content: center;
    width: 21px;
    border-left: 1px solid #a8ceff;
}

.picked-tools span:first-child {
    border-left: 0;
}

.picked-tools svg {
    width: 11px;
    height: 11px;
}

.dear,
.notes,
.band h3 {
    margin: 0;
    font-size: 13.800px;
    line-height: 18px;
    font-weight: 600;
    color: #3c3c3c;
}

.band h3 {
    font-size: 14.500px;
    font-weight: 700;
}

.dear {
    margin-top: 16px;
}

.lead {
    margin: 3px 45px 0;
    font-size: 8.500px;
    line-height: 10px;
    color: #aaa;
}

.band {
    margin-top: 16px;
    padding: 15px 0 14px;
    background: #f5f5f5;
}

.band-row {
    display: flex;
    align-items: center;
    justify-content: center;
    gap: 15px;
    margin-top: 2px;
    font-size: 11.500px;
    line-height: 18px;
    font-weight: 300;
    letter-spacing: .4px;
    color: #9c9c9c;
}

.band h3 + .band-row {
    margin-top: 4px;
}

.band-row i {
    width: 1px;
    height: 15px;
    background: #bbb;
}

.notes {
    margin-top: 18px;
    font-size: 13.500px;
    font-weight: 500;
}

.notes-text {
    margin: 3px 0 0;
    font-size: 8.500px;
    line-height: 12px;
    color: #bbb;
}

.actions {
    display: flex;
    justify-content: center;
    gap: 5px;
    margin-top: 16px;
    padding-bottom: 24px;
    font-size: 7.500px;
    font-weight: 600;
}

.actions a {
    height: 24px;
    line-height: 24px;
    border-radius: 2px;
    box-sizing: border-box;
    text-align: center;
}

.btn-ghost {
    width: 83px;
    border: 1px solid #f5d870;
    line-height: 22px !important;
    color: #eab800;
}

.btn-gold {
    width: 88px;
    background: #e8b500;
    color: #fff;
}

.btn-wide {
    width: 114px;
}

.actions-single {
    margin-top: 17px;
    padding-bottom: 17px;
}

.pane-right {
    width: 156px;
    flex: none;
    border-left: 1px solid #e6e6e6;
    box-sizing: border-box;
}

.right-head {
    height: 35px;
    display: flex;
    align-items: center;
    justify-content: flex-end;
    gap: 4px;
    padding-right: 10px;
    border-bottom: 1px solid #ececec;
    box-sizing: border-box;
    font-size: 8px;
    font-weight: 600;
}

.right-head a {
    height: 25px;
    display: flex;
    align-items: center;
    justify-content: center;
    border-radius: 3px;
    box-sizing: border-box;
}

.btn-preview {
    width: 69px;
    border: 1px solid #6aa6f5;
    color: #0069ff;
    gap: 5px;
}

.btn-preview svg {
    width: 8px;
    height: 8px;
}

.btn-save {
    width: 44px;
    background: #0069ff;
    color: #fff;
}

.props {
    padding: 8px 10px 0 9px;
}

.props label {
    display: block;
    font-size: 8px;
    line-height: 12px;
    color: #777;
    white-space: nowrap;
}

.props > label {
    margin-top: 6.500px;
    margin-bottom: 3px;
}

.props > label:first-child {
    margin-top: 0;
}

.seg {
    display: flex;
    height: 17px;
    background: #f3f3f3;
    border-radius: 2px;
    font-size: 8px;
    color: #666;
    box-shadow: 0 0 0 .5px #ececec;
}

.seg span {
    flex: 1;
    display: flex;
    align-items: center;
    justify-content: center;
    border-left: 1px solid #ebebeb;
}

.seg span:first-child {
    border-left: 0;
}

.seg .on {
    background: #cfe4ff;
    color: #555;
}

.seg svg {
    width: 9px;
    height: 9px;
    color: #666;
}

.seg .strong {
    font-weight: 700;
    color: #222;
}

.seg .em {
    font-style: italic;
}

.seg .under {
    text-decoration: underline;
}

.select {
    display: flex;
    align-items: center;
    justify-content: space-between;
    height: 19px;
    padding: 0 6px 0 5px;
    border: 1px solid #ececec;
    border-radius: 2px;
    box-sizing: border-box;
    box-shadow: 0 1px 1px #f0f0f0;
    font-size: 8px;
    color: #666;
}

.select svg {
    width: 7px;
    height: 7px;
    color: #999;
}

.line {
    display: flex;
    align-items: center;
    justify-content: space-between;
    height: 17px;
    margin-top: 8px;
    margin-bottom: 7px;
}

.line-color {
    height: 16px;
    margin-top: 7px;
    margin-bottom: 0;
}

.line + label {
    margin-top: 0;
}

.line-color + .line-color {
    margin-top: 7.500px;
}

.stepper {
    display: flex;
    width: 59px;
    height: 17px;
    background: #f3f3f3;
    border-radius: 2px;
    font-size: 8px;
    color: #666;
    text-align: center;
    line-height: 17px;
}

.stepper span {
    width: 14px;
}

.stepper b {
    flex: 1;
    background: #fff;
    font-weight: 400;
}

.swatch {
    display: flex;
    align-items: center;
    width: 25px;
    height: 16px;
    background: #f3f3f3;
    border-radius: 2px;
    color: #999;
}

.swatch i {
    width: 14px;
    height: 13px;
    margin-left: 1px;
    background: #333;
    border-radius: 2px;
}

.swatch svg {
    width: 8px;
    height: 8px;
    margin-left: 1px;
}

.pair {
    display: flex;
    margin-top: -1px;
    margin-bottom: 1px;
}

.pair label {
    width: 71px;
}

.pair ~ label {
    margin-top: 5.500px;
    margin-bottom: 4px;
}

.fields {
    display: flex;
    gap: 4px;
    height: 17px;
}

.pair + .fields .field {
    flex: 1;
}

.field {
    display: flex;
    width: 54px;
    height: 17px;
    border: 1px solid #f0f0f0;
    border-radius: 2px;
    box-sizing: border-box;
    font-size: 8px;
    line-height: 15px;
    color: #666;
}

.field svg {
    width: 18px;
    height: 15px;
    padding: 2px 4px;
    box-sizing: border-box;
    background: #f3f3f3;
    color: #777;
}

.field b {
    flex: 1;
    font-weight: 400;
    text-align: center;
}

.field-all {
    width: 19px;
    height: 17px;
    margin-left: 1px;
    background: #f3f3f3;
    border-radius: 2px;
    color: #777;
}

.field-all svg {
    display: block;
    width: 19px;
    height: 17px;
    padding: 3px;
    box-sizing: border-box;
}
```
